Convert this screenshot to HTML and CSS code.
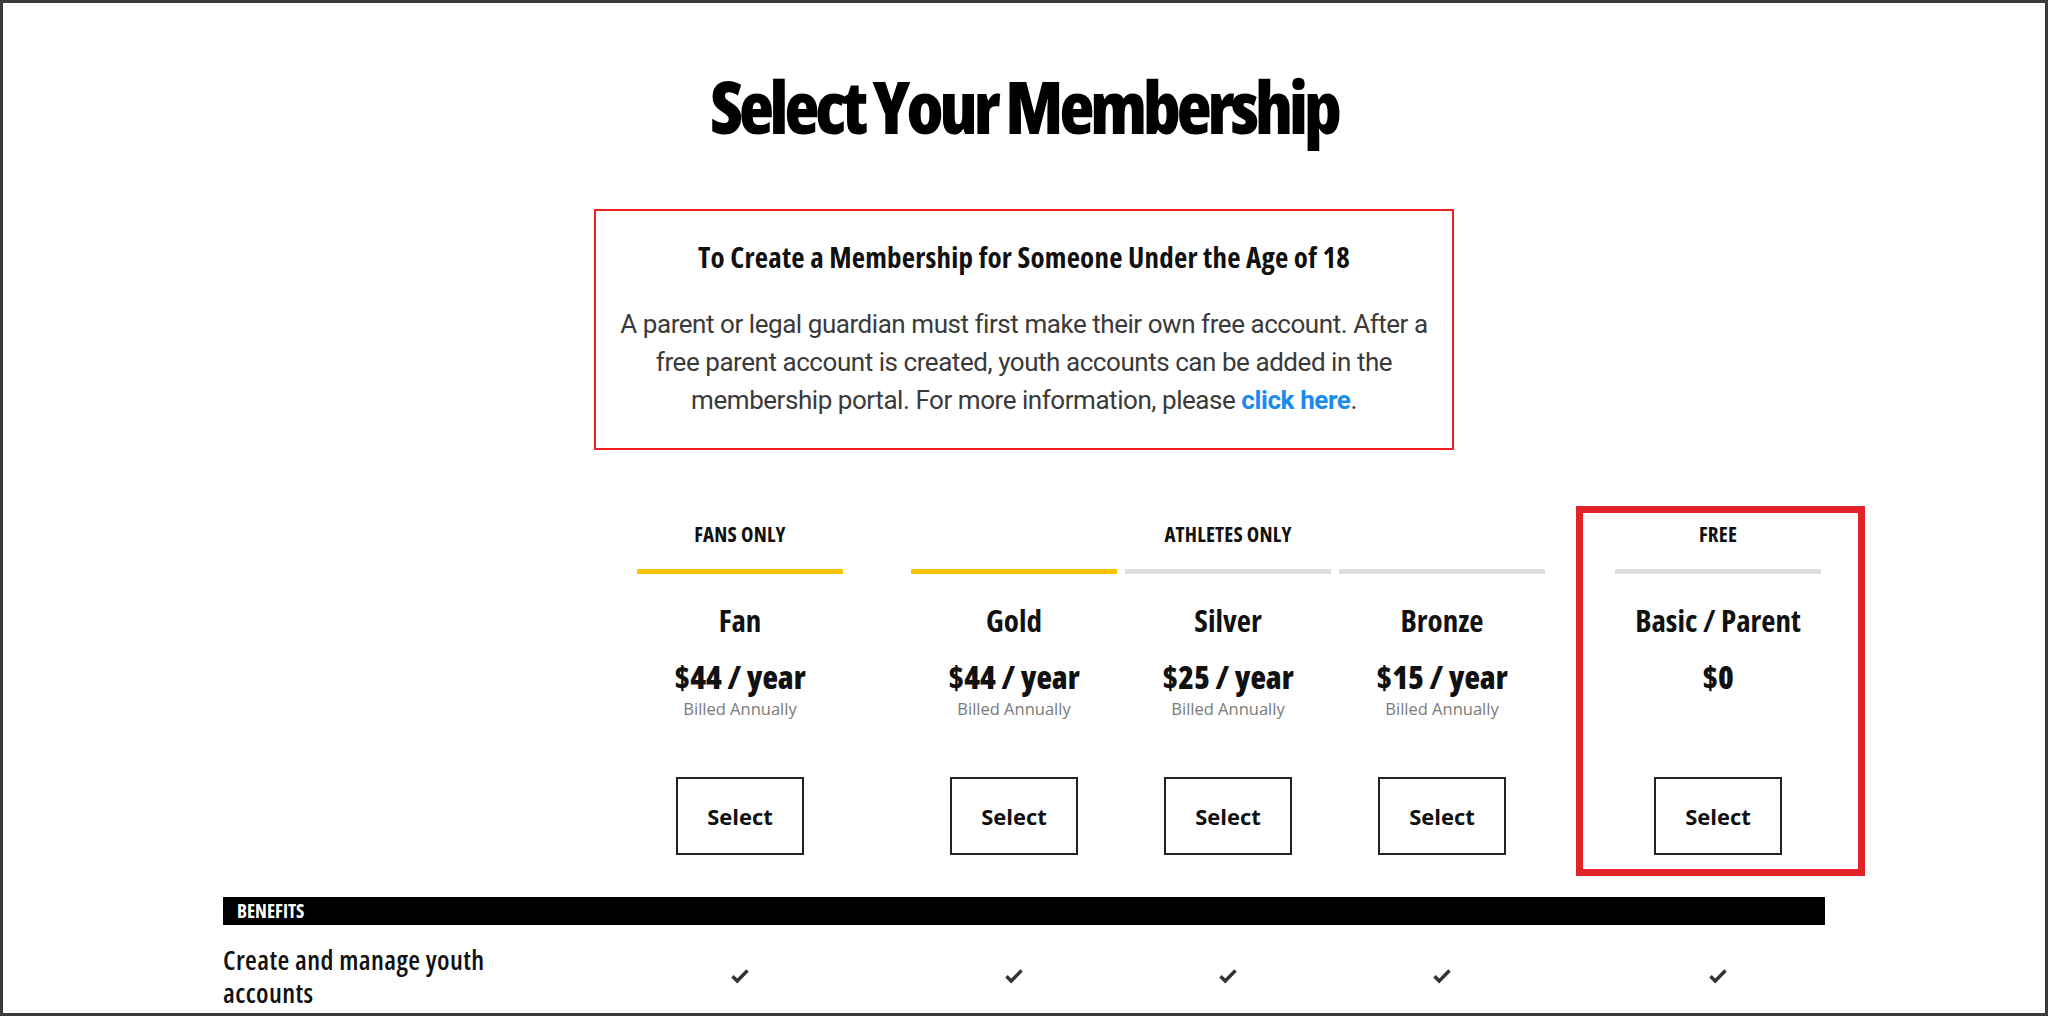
FILE: index.html
```html
<!DOCTYPE html>
<html lang="en">
<head>
<meta charset="utf-8">
<title>Select Your Membership</title>
<link rel="stylesheet" href="styles.css">
</head>
<body>
<div class="frame">
  <h1 class="title">Select Your Membership</h1>

  <section class="notice">
    <h2 class="notice-title">To Create a Membership for Someone Under the Age of 18</h2>
    <p class="notice-text">
      <span class="line">A parent or legal guardian must first make their own free account. After a</span>
      <span class="line">free parent account is created, youth accounts can be added in the</span>
      <span class="line">membership portal. For more information, please <a class="link" href="#">click here</a>.</span>
    </p>
  </section>

  <section class="plans">
    <div class="label-col"></div>

    <div class="plan">
      <div class="group">FANS ONLY</div>
      <div class="bar bar-gold"></div>
      <div class="name">Fan</div>
      <div class="price">$44 / year</div>
      <div class="billed">Billed Annually</div>
      <button class="select">Select</button>
    </div>

    <div class="spacer"></div>

    <div class="plan">
      <div class="group"></div>
      <div class="bar bar-gold"></div>
      <div class="name">Gold</div>
      <div class="price">$44 / year</div>
      <div class="billed">Billed Annually</div>
      <button class="select">Select</button>
    </div>

    <div class="plan">
      <div class="group">ATHLETES ONLY</div>
      <div class="bar bar-grey"></div>
      <div class="name">Silver</div>
      <div class="price">$25 / year</div>
      <div class="billed">Billed Annually</div>
      <button class="select">Select</button>
    </div>

    <div class="plan">
      <div class="group"></div>
      <div class="bar bar-grey"></div>
      <div class="name">Bronze</div>
      <div class="price">$15 / year</div>
      <div class="billed">Billed Annually</div>
      <button class="select">Select</button>
    </div>

    <div class="spacer"></div>

    <div class="plan plan-highlight">
      <div class="group">FREE</div>
      <div class="bar bar-grey"></div>
      <div class="name">Basic / Parent</div>
      <div class="price">$0</div>
      <div class="billed"></div>
      <button class="select">Select</button>
    </div>
  </section>

  <section class="benefits">
    <div class="benefits-bar">BENEFITS</div>
    <div class="benefit-row">
      <div class="benefit-label">Create and manage youth accounts</div>
      <div class="check-cell"><svg class="check" viewBox="0 0 20 16" width="20" height="16"><path d="M2.5 8.2 L7.2 13 L17.5 2.5" fill="none" stroke="#333" stroke-width="3.4" stroke-linecap="butt" stroke-linejoin="miter"/></svg></div>
      <div></div>
      <div class="check-cell"><svg class="check" viewBox="0 0 20 16" width="20" height="16"><path d="M2.5 8.2 L7.2 13 L17.5 2.5" fill="none" stroke="#333" stroke-width="3.4" stroke-linecap="butt" stroke-linejoin="miter"/></svg></div>
      <div class="check-cell"><svg class="check" viewBox="0 0 20 16" width="20" height="16"><path d="M2.5 8.2 L7.2 13 L17.5 2.5" fill="none" stroke="#333" stroke-width="3.4" stroke-linecap="butt" stroke-linejoin="miter"/></svg></div>
      <div class="check-cell"><svg class="check" viewBox="0 0 20 16" width="20" height="16"><path d="M2.5 8.2 L7.2 13 L17.5 2.5" fill="none" stroke="#333" stroke-width="3.4" stroke-linecap="butt" stroke-linejoin="miter"/></svg></div>
      <div></div>
      <div class="check-cell"><svg class="check" viewBox="0 0 20 16" width="20" height="16"><path d="M2.5 8.2 L7.2 13 L17.5 2.5" fill="none" stroke="#333" stroke-width="3.4" stroke-linecap="butt" stroke-linejoin="miter"/></svg></div>
    </div>
  </section>
</div>
</body>
</html>
```

FILE: styles.css
```css
* { box-sizing: border-box; }

html, body {
  margin: 0;
  padding: 0;
  background: #ffffff;
}

.frame {
  width: 2048px;
  height: 1016px;
  border: 3px solid #3a3a3a;
  overflow: hidden;
  font-family: "Open Sans", "Liberation Sans", sans-serif;
  color: #111;
}

.title {
  margin: 63px 0 0;
  text-align: center;
  font-size: 72px;
  line-height: 80px;
  font-weight: 800;
  font-stretch: 75%;
  letter-spacing: -4px;
  color: #000;
}

.notice {
  width: 860px;
  margin: 63px auto 0;
  border: 2px solid #f02020;
  padding: 29px 0 29px;
  text-align: center;
}

.notice-title {
  margin: 0;
  font-size: 29px;
  line-height: 34px;
  font-weight: 700;
  font-stretch: 75%;
  letter-spacing: 0.2px;
  color: #111;
}

.notice-text {
  margin: 31px 0 0;
  font-family: Roboto, "Liberation Sans", sans-serif;
  font-size: 26px;
  line-height: 38px;
  font-weight: 400;
  letter-spacing: -0.45px;
  color: #3a3a3a;
}

.line {
  display: block;
  white-space: nowrap;
}

.link {
  color: #1a8cf0;
  font-weight: 700;
  letter-spacing: -0.4px;
  text-decoration: none;
}

.plans,
.benefit-row {
  display: grid;
  grid-template-columns: 410px 214px 60px 214px 214px 214px 62px 214px;
}

.plans {
  width: 1602px;
  margin: 72px auto 0;
}

.plan {
  position: relative;
  display: flex;
  flex-direction: column;
  align-items: center;
  text-align: center;
}

.group {
  height: 24px;
  font-size: 21px;
  line-height: 24px;
  font-weight: 700;
  font-stretch: 75%;
  letter-spacing: 0.2px;
  white-space: nowrap;
  color: #111;
}

.bar {
  width: 206px;
  height: 5px;
  margin-top: 23px;
}

.bar-gold { background: #f6c400; }
.bar-grey { background: #dedede; }

.name {
  margin-top: 28px;
  font-size: 31px;
  line-height: 36px;
  font-weight: 700;
  font-stretch: 75%;
  white-space: nowrap;
  color: #111;
}

.price {
  margin-top: 20px;
  font-size: 32px;
  line-height: 38px;
  font-weight: 800;
  font-stretch: 75%;
  white-space: nowrap;
  color: #111;
}

.billed {
  margin-top: 3px;
  height: 20px;
  font-size: 16.5px;
  line-height: 20px;
  color: #7a7a7a;
  white-space: nowrap;
}

.select {
  margin-top: 58px;
  width: 128px;
  height: 78px;
  border: 2px solid #222;
  background: #fff;
  font-family: "Open Sans", "Liberation Sans", sans-serif;
  font-size: 22px;
  font-weight: 700;
  color: #111;
  padding: 0;
  cursor: pointer;
}

.plan-highlight::after {
  content: "";
  position: absolute;
  left: -35px;
  right: -40px;
  top: -16px;
  bottom: -21px;
  border: 7px solid #e3232a;
  pointer-events: none;
}

.benefits {
  width: 1602px;
  margin: 42px auto 0;
}

.benefits-bar {
  height: 28px;
  background: #000;
  color: #fff;
  font-size: 19px;
  line-height: 28px;
  font-weight: 700;
  font-stretch: 75%;
  padding-left: 14px;
}

.benefit-row {
  margin-top: 18px;
}

.benefit-label {
  max-width: 300px;
  font-size: 27px;
  line-height: 33px;
  font-weight: 600;
  font-stretch: 75%;
  letter-spacing: 0.4px;
  color: #111;
}

.check-cell {
  display: flex;
  justify-content: center;
  padding-top: 25px;
}

.check {
  display: block;
}
```
